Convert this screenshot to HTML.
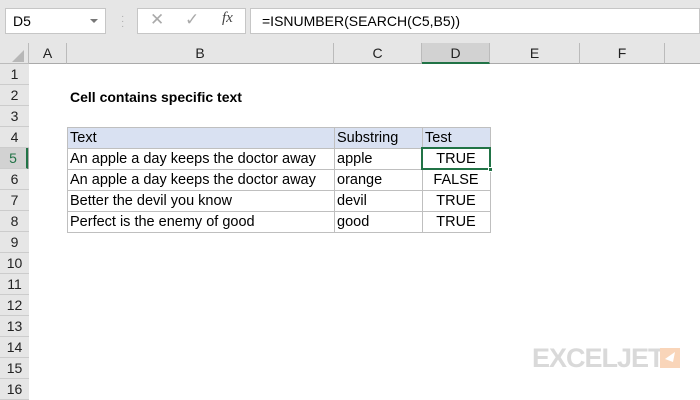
<!DOCTYPE html>
<html><head><style>
*{margin:0;padding:0;box-sizing:border-box}
body{width:700px;height:400px;overflow:hidden;background:#fff;font-family:"Liberation Sans",Calibri,sans-serif;font-size:14px;color:#000;position:relative}
.a{position:absolute}
.top{left:0;top:0;width:700px;height:43px;background:#e6e6e6}
.hdr{background:#e6e6e6;color:#222;font-size:14px;text-align:center}
.cell{position:absolute;height:21px;line-height:23px;padding-left:3px;font-size:14.5px;white-space:nowrap}
</style></head><body>
<div class="a top"></div>
<div class="a" style="left:5px;top:8px;width:101px;height:26px;background:#fff;border:1px solid #c6c6c6;line-height:24px;padding-left:7px;font-size:14px">D5</div>
<div class="a" style="left:90px;top:19px;width:0;height:0;border-left:4px solid transparent;border-right:4px solid transparent;border-top:4px solid #777"></div>
<div class="a" style="left:121px;top:14px;color:#aaa;font-size:10px;line-height:5px">·<br>·<br>·</div>
<div class="a" style="left:137px;top:8px;width:109px;height:26px;background:#fff;border:1px solid #c6c6c6"></div>
<div class="a" style="left:150px;top:10px;color:#aaa;font-size:17px">✕</div>
<div class="a" style="left:185px;top:10px;color:#aaa;font-size:17px">✓</div>
<div class="a" style="left:222px;top:10px;color:#444;font-size:15px;font-style:italic;font-family:'Liberation Serif',serif">fx</div>
<div class="a" style="left:250px;top:8px;width:450px;height:26px;background:#fff;border:1px solid #c6c6c6;line-height:24px;padding-left:11px;font-size:14px">=ISNUMBER(SEARCH(C5,B5))</div>
<div class="a hdr" style="left:0;top:43px;width:29px;height:21px;border-right:1px solid #bbb;border-bottom:1px solid #bbb"></div>
<div class="a" style="left:12px;top:50px;width:0;height:0;border-left:12px solid transparent;border-bottom:12px solid #b7b7b7"></div>
<div class="a hdr" style="left:29px;top:43px;width:38px;height:21px;line-height:21px;border-right:1px solid #bbb;border-bottom:1px solid #aaa">A</div>
<div class="a hdr" style="left:67px;top:43px;width:267px;height:21px;line-height:21px;border-right:1px solid #bbb;border-bottom:1px solid #aaa">B</div>
<div class="a hdr" style="left:334px;top:43px;width:88px;height:21px;line-height:21px;border-right:1px solid #bbb;border-bottom:1px solid #aaa">C</div>
<div class="a hdr" style="left:422px;top:43px;width:68px;height:21px;line-height:21px;border-right:1px solid #bbb;border-bottom:2px solid #217346;background:#d2d2d2">D</div>
<div class="a hdr" style="left:490px;top:43px;width:90px;height:21px;line-height:21px;border-right:1px solid #bbb;border-bottom:1px solid #aaa">E</div>
<div class="a hdr" style="left:580px;top:43px;width:85px;height:21px;line-height:21px;border-right:1px solid #bbb;border-bottom:1px solid #aaa">F</div>
<div class="a hdr" style="left:665px;top:43px;width:35px;height:21px;border-bottom:1px solid #aaa"></div>
<div class="a" style="left:0;top:64px;width:29px;height:336px;background:#e6e6e6;border-right:1px solid #aaa"></div>
<div class="a hdr" style="left:0;top:64px;width:29px;height:21px;line-height:21px;border-bottom:1px solid #ccc">1</div>
<div class="a hdr" style="left:0;top:85px;width:29px;height:21px;line-height:21px;border-bottom:1px solid #ccc">2</div>
<div class="a hdr" style="left:0;top:106px;width:29px;height:21px;line-height:21px;border-bottom:1px solid #ccc">3</div>
<div class="a hdr" style="left:0;top:127px;width:29px;height:21px;line-height:21px;border-bottom:1px solid #ccc">4</div>
<div class="a hdr" style="left:0;top:148px;width:28px;height:21px;line-height:21px;border-bottom:1px solid #ccc;background:#d2d2d2;color:#217346;border-right:2px solid #217346">5</div>
<div class="a hdr" style="left:0;top:169px;width:29px;height:21px;line-height:21px;border-bottom:1px solid #ccc">6</div>
<div class="a hdr" style="left:0;top:190px;width:29px;height:21px;line-height:21px;border-bottom:1px solid #ccc">7</div>
<div class="a hdr" style="left:0;top:211px;width:29px;height:21px;line-height:21px;border-bottom:1px solid #ccc">8</div>
<div class="a hdr" style="left:0;top:232px;width:29px;height:21px;line-height:21px;border-bottom:1px solid #ccc">9</div>
<div class="a hdr" style="left:0;top:253px;width:29px;height:21px;line-height:21px;border-bottom:1px solid #ccc">10</div>
<div class="a hdr" style="left:0;top:274px;width:29px;height:21px;line-height:21px;border-bottom:1px solid #ccc">11</div>
<div class="a hdr" style="left:0;top:295px;width:29px;height:21px;line-height:21px;border-bottom:1px solid #ccc">12</div>
<div class="a hdr" style="left:0;top:316px;width:29px;height:21px;line-height:21px;border-bottom:1px solid #ccc">13</div>
<div class="a hdr" style="left:0;top:337px;width:29px;height:21px;line-height:21px;border-bottom:1px solid #ccc">14</div>
<div class="a hdr" style="left:0;top:358px;width:29px;height:21px;line-height:21px;border-bottom:1px solid #ccc">15</div>
<div class="a hdr" style="left:0;top:379px;width:29px;height:21px;line-height:21px;border-bottom:1px solid #ccc">16</div>
<div class="cell" style="left:67px;top:86px;font-weight:bold;font-size:14px">Cell contains specific text</div>
<div class="a" style="left:67px;top:127px;width:423px;height:21px;background:#d9e1f2"></div>
<div class="a" style="left:67px;top:127px;width:424px;height:106px;border:1px solid #bfbfbf"></div>
<div class="a" style="left:67px;top:148px;width:423px;height:1px;background:#bfbfbf"></div>
<div class="a" style="left:67px;top:169px;width:423px;height:1px;background:#bfbfbf"></div>
<div class="a" style="left:67px;top:190px;width:423px;height:1px;background:#bfbfbf"></div>
<div class="a" style="left:67px;top:211px;width:423px;height:1px;background:#bfbfbf"></div>
<div class="a" style="left:334px;top:127px;width:1px;height:106px;background:#bfbfbf"></div>
<div class="a" style="left:422px;top:127px;width:1px;height:106px;background:#bfbfbf"></div>
<div class="cell" style="left:67px;top:127px">Text</div>
<div class="cell" style="left:334px;top:127px">Substring</div>
<div class="cell" style="left:422px;top:127px">Test</div>
<div class="cell" style="left:67px;top:148px">An apple a day keeps the doctor away</div>
<div class="cell" style="left:334px;top:148px">apple</div>
<div class="cell" style="left:422px;top:148px;width:68px;text-align:center;padding:0">TRUE</div>
<div class="cell" style="left:67px;top:169px">An apple a day keeps the doctor away</div>
<div class="cell" style="left:334px;top:169px">orange</div>
<div class="cell" style="left:422px;top:169px;width:68px;text-align:center;padding:0">FALSE</div>
<div class="cell" style="left:67px;top:190px">Better the devil you know</div>
<div class="cell" style="left:334px;top:190px">devil</div>
<div class="cell" style="left:422px;top:190px;width:68px;text-align:center;padding:0">TRUE</div>
<div class="cell" style="left:67px;top:211px">Perfect is the enemy of good</div>
<div class="cell" style="left:334px;top:211px">good</div>
<div class="cell" style="left:422px;top:211px;width:68px;text-align:center;padding:0">TRUE</div>
<div class="a" style="left:421px;top:147px;width:70px;height:23px;border:2px solid #217346"></div>
<div class="a" style="left:488px;top:167px;width:5px;height:5px;background:#217346;border:1px solid #fff"></div>
<div class="a" style="left:532px;top:343px;font-size:27px;font-weight:bold;color:#d9d9d9;letter-spacing:-1px;line-height:30px">EXCELJET</div>
<div class="a" style="left:660px;top:348px;width:20px;height:20px;background:#f9d5b9"></div>
<svg class="a" style="left:660px;top:348px" width="20" height="20"><path d="M15 4 L5 11 L13 14 Z" fill="#fff"/></svg>
</body></html>
